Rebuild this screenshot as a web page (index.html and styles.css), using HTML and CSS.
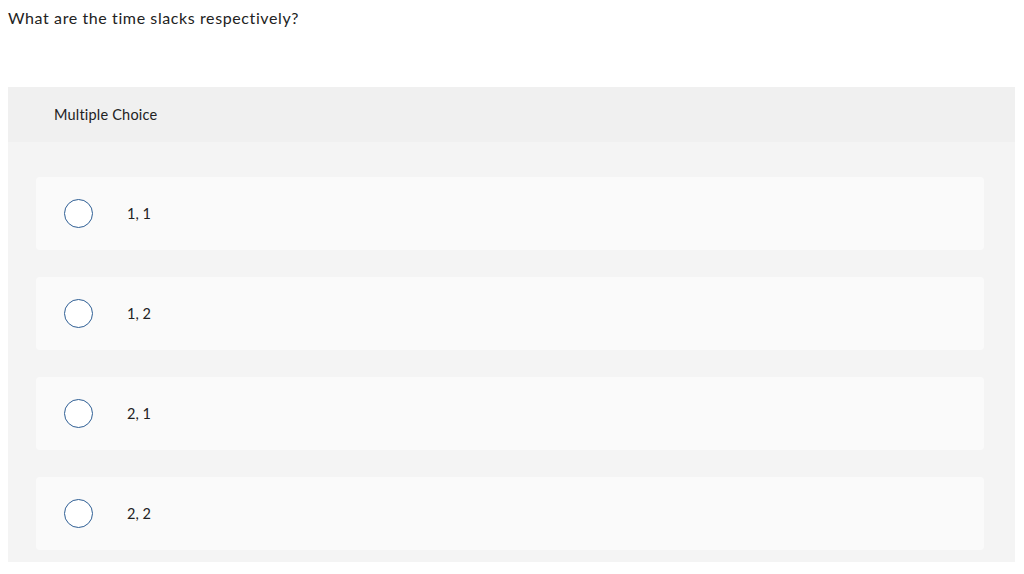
FILE: index.html
```html
<!DOCTYPE html>
<html>
<head>
<meta charset="utf-8">
<link rel="stylesheet" href="styles.css">
</head>
<body>
<p class="question">What are the time slacks respectively?</p>
<section class="mc">
  <header class="mc-head">Multiple Choice</header>
  <div class="mc-body">
    <label class="choice"><span class="radio"></span><span class="text">1, 1</span></label>
    <label class="choice"><span class="radio"></span><span class="text">1, 2</span></label>
    <label class="choice"><span class="radio"></span><span class="text">2, 1</span></label>
    <label class="choice"><span class="radio"></span><span class="text">2, 2</span></label>
  </div>
</section>
</body>
</html>
```
FILE: styles.css
```css
html, body { margin: 0; padding: 0; background: #fff; }
body {
  font-family: "Lato", "Liberation Sans", sans-serif;
  color: #222;
  padding: 0 9px 0 8px;
}
.question {
  margin: 0;
  padding-top: 8px;
  font-family: "Lato", "Liberation Sans", sans-serif;
  font-size: 16px;
  letter-spacing: 0.6px;
  line-height: 20px;
  height: 79px;
  color: #222;
}
.mc { background: #f4f4f4; }
.mc-head {
  background: #f0f0f0;
  height: 55px;
  display: flex;
  align-items: center;
  padding-left: 46px;
  font-size: 14.5px;
  letter-spacing: 0.2px;
  color: #222;
}
.mc-body {
  padding: 35px 31px 12px 28px;
  display: flex;
  flex-direction: column;
  gap: 27px;
}
.choice {
  display: flex;
  align-items: center;
  height: 73px;
  background: #fafafa;
  border-radius: 4px;
  padding-left: 28px;
}
.radio {
  width: 27px;
  height: 27px;
  border: 1.5px solid #2e5e94;
  border-radius: 50%;
  background: #fff;
  flex: none;
}
.text {
  margin-left: 34px;
  font-size: 14.5px;
  color: #222;
}
```
